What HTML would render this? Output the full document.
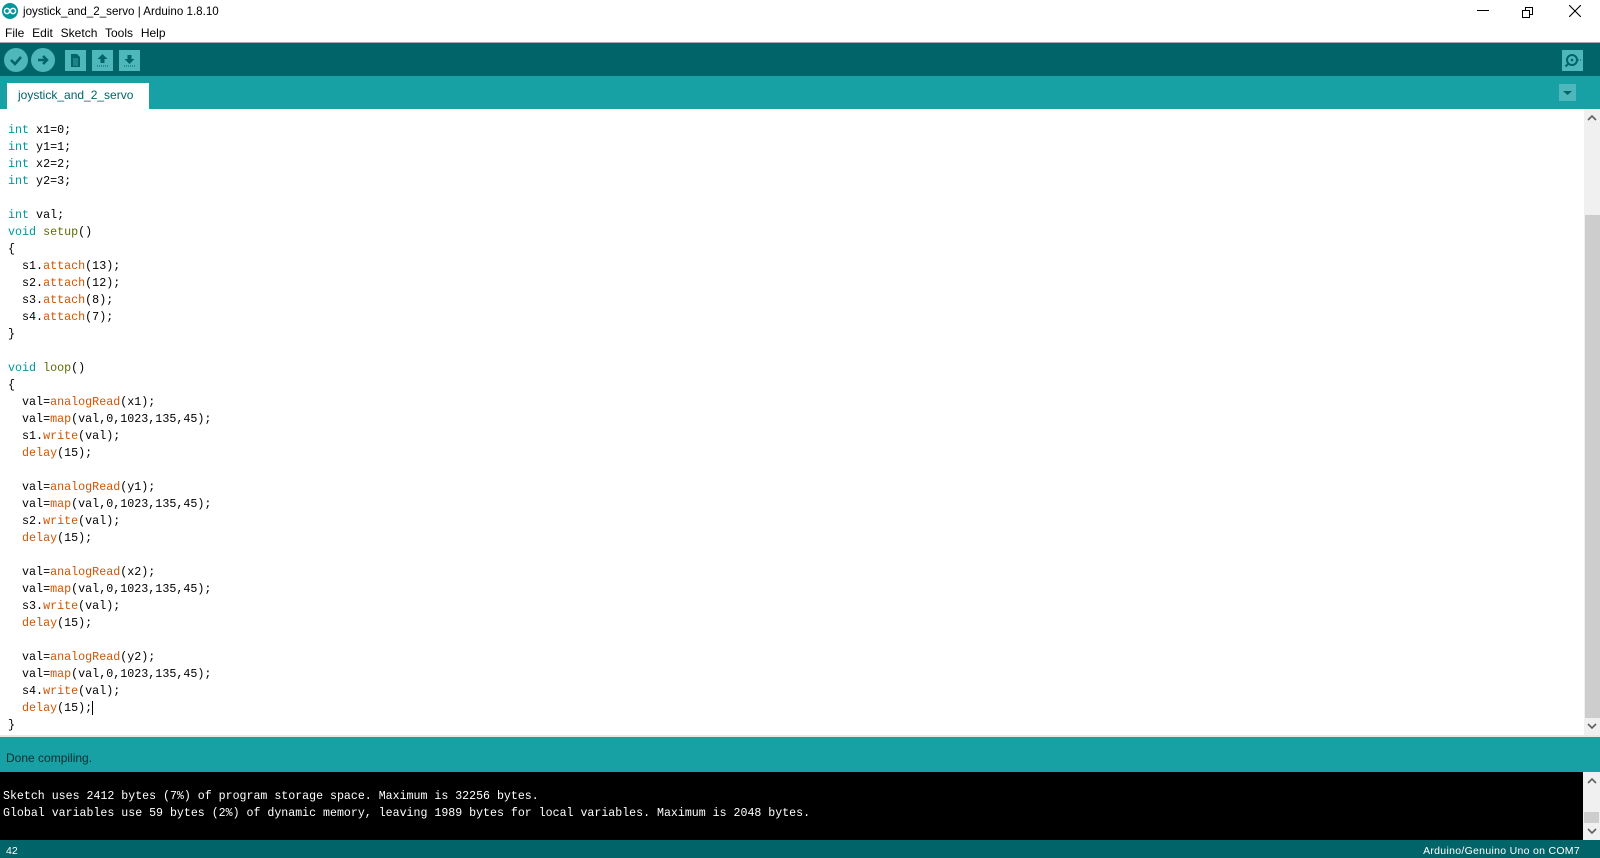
<!DOCTYPE html>
<html><head><meta charset="utf-8"><style>
*{margin:0;padding:0;box-sizing:border-box}
body{width:1600px;height:858px;overflow:hidden;background:#fff;font-family:"Liberation Sans",sans-serif;position:relative}
.abs{position:absolute}
#code{position:absolute;left:8px;top:122px;font-family:"Liberation Mono",monospace;font-size:11.7px;line-height:17px;color:#000;white-space:pre}
.k{color:#00979C}.f{color:#D35400}.s{color:#5E6D03}
#con{position:absolute;left:3px;top:788px;font-family:"Liberation Mono",monospace;font-size:11.6px;line-height:17px;color:#fff;white-space:pre}
.btn{position:absolute;background:#4DB7BB}
</style></head><body>
<svg class="abs" style="left:2px;top:3px" width="16" height="16" viewBox="0 0 16 16"><circle cx="8" cy="8" r="8" fill="#00979C"/><circle cx="5" cy="8" r="2.6" fill="none" stroke="#fff" stroke-width="1.5"/><circle cx="11" cy="8" r="2.6" fill="none" stroke="#fff" stroke-width="1.5"/></svg>
<div class="abs" style="left:23px;top:5px;font-size:11.6px;color:#000">joystick_and_2_servo | Arduino 1.8.10</div>
<div class="abs" style="left:1477px;top:10px;width:12px;height:1px;background:#000"></div>
<div class="abs" style="left:1525px;top:7px;width:8px;height:8px;border:1px solid #000"></div>
<div class="abs" style="left:1522px;top:10px;width:8px;height:8px;border:1px solid #000;background:#fff"></div>
<svg class="abs" style="left:1569px;top:5px" width="12" height="12"><path d="M0 0L12 12M12 0L0 12" stroke="#000" stroke-width="1.1"/></svg>
<div class="abs" style="left:5px;top:26px;font-size:12px;color:#000;word-spacing:4.5px">File Edit Sketch Tools Help</div>
<div class="abs" style="left:0;top:42px;width:1600px;height:1px;background:#aaa"></div>
<div class="abs" style="left:0;top:43px;width:1600px;height:33px;background:#006468"></div>
<div class="btn" style="left:4px;top:48px;width:24px;height:24px;border-radius:50%"></div>
<svg class="abs" style="left:4px;top:48px" width="24" height="24"><path d="M7 12l4 4 6-7" stroke="#006468" stroke-width="2.5" fill="none"/></svg>
<div class="btn" style="left:31px;top:48px;width:24px;height:24px;border-radius:50%"></div>
<svg class="abs" style="left:31px;top:48px" width="24" height="24"><path d="M7 12h8M12 8l4 4-4 4" stroke="#006468" stroke-width="2.5" fill="none"/></svg>
<div class="btn" style="left:65px;top:50px;width:21px;height:21px"></div>
<svg class="abs" style="left:65px;top:50px" width="21" height="21"><path d="M6 4h6l3 3v10H6z" fill="#006468"/><path d="M8 9h5M8 11h5M8 13h5M8 15h5" stroke="#4DB7BB" stroke-width="0.8"/></svg>
<div class="btn" style="left:92px;top:50px;width:21px;height:21px"></div>
<svg class="abs" style="left:92px;top:50px" width="21" height="21"><path d="M10.5 4l5 5h-3v4h-4V9h-3z" fill="#006468"/><path d="M5 16h11" stroke="#006468" stroke-dasharray="1 1"/></svg>
<div class="btn" style="left:119px;top:50px;width:21px;height:21px"></div>
<svg class="abs" style="left:119px;top:50px" width="21" height="21"><path d="M10.5 14l5-5h-3V5h-4v4h-3z" fill="#006468"/><path d="M5 16h11" stroke="#006468" stroke-dasharray="1 1"/></svg>
<div class="btn" style="left:1562px;top:50px;width:21px;height:21px"></div>
<svg class="abs" style="left:1562px;top:50px" width="21" height="21"><circle cx="10" cy="10" r="5" fill="none" stroke="#006468" stroke-width="2"/><circle cx="10" cy="10" r="1.3" fill="#006468"/><path d="M6.5 13.5l-3 3" stroke="#006468" stroke-width="2"/><path d="M16 10h3" stroke="#006468" stroke-dasharray="1 1"/></svg>
<div class="abs" style="left:0;top:76px;width:1600px;height:33px;background:#17A1A5"></div>
<div class="abs" style="left:7px;top:83px;width:142px;height:26px;background:#fff"></div>
<div class="abs" style="left:18px;top:88px;font-size:12px;color:#006468">joystick_and_2_servo</div>
<div class="abs" style="left:1559px;top:84px;width:17px;height:17px;background:#4DB7BB"></div>
<svg class="abs" style="left:1559px;top:84px" width="17" height="17"><path d="M4 7h9l-4.5 4z" fill="#006468"/></svg>
<div id="code"><span class="k">int</span> x1=0;
<span class="k">int</span> y1=1;
<span class="k">int</span> x2=2;
<span class="k">int</span> y2=3;

<span class="k">int</span> val;
<span class="k">void</span> <span class="s">setup</span>()
{
  s1.<span class="f">attach</span>(13);
  s2.<span class="f">attach</span>(12);
  s3.<span class="f">attach</span>(8);
  s4.<span class="f">attach</span>(7);
}

<span class="k">void</span> <span class="s">loop</span>()
{
  val=<span class="f">analogRead</span>(x1);
  val=<span class="f">map</span>(val,0,1023,135,45);
  s1.<span class="f">write</span>(val);
  <span class="f">delay</span>(15);

  val=<span class="f">analogRead</span>(y1);
  val=<span class="f">map</span>(val,0,1023,135,45);
  s2.<span class="f">write</span>(val);
  <span class="f">delay</span>(15);

  val=<span class="f">analogRead</span>(x2);
  val=<span class="f">map</span>(val,0,1023,135,45);
  s3.<span class="f">write</span>(val);
  <span class="f">delay</span>(15);

  val=<span class="f">analogRead</span>(y2);
  val=<span class="f">map</span>(val,0,1023,135,45);
  s4.<span class="f">write</span>(val);
  <span class="f">delay</span>(15);<span style="border-left:1px solid #000"></span>
}</div>
<div class="abs" style="left:1584px;top:109px;width:16px;height:626px;background:#f0f0f0"></div>
<div class="abs" style="left:1585px;top:215px;width:15px;height:503px;background:#cdcdcd"></div>
<svg class="abs" style="left:1584px;top:112px" width="16" height="12"><path d="M4 8l4-4 4 4" stroke="#606060" stroke-width="1.6" fill="none"/></svg>
<svg class="abs" style="left:1584px;top:720px" width="16" height="12"><path d="M4 4l4 4 4-4" stroke="#606060" stroke-width="1.6" fill="none"/></svg>
<div class="abs" style="left:0;top:735px;width:1600px;height:3px;background:#e8e8e8;border-bottom:1px solid #777"></div>
<div class="abs" style="left:0;top:738px;width:1600px;height:34px;background:#17A1A5"></div>
<div class="abs" style="left:6px;top:751px;font-size:12px;color:#0b2d2e">Done compiling.</div>
<div class="abs" style="left:0;top:772px;width:1600px;height:68px;background:#000"></div>
<div id="con">Sketch uses 2412 bytes (7%) of program storage space. Maximum is 32256 bytes.
Global variables use 59 bytes (2%) of dynamic memory, leaving 1989 bytes for local variables. Maximum is 2048 bytes.</div>
<div class="abs" style="left:1583px;top:772px;width:17px;height:68px;background:#f0f0f0"></div>
<div class="abs" style="left:1584px;top:812px;width:15px;height:11px;background:#cdcdcd"></div>
<svg class="abs" style="left:1584px;top:775px" width="16" height="12"><path d="M4 8l4-4 4 4" stroke="#606060" stroke-width="1.6" fill="none"/></svg>
<svg class="abs" style="left:1584px;top:825px" width="16" height="12"><path d="M4 4l4 4 4-4" stroke="#606060" stroke-width="1.6" fill="none"/></svg>
<div class="abs" style="left:0;top:840px;width:1600px;height:18px;background:#006468"></div>
<div class="abs" style="left:6px;top:845px;font-size:10.5px;color:#fff">42</div>
<div class="abs" style="right:20px;top:845px;font-size:10.5px;color:#fff;letter-spacing:0.3px">Arduino/Genuino Uno on COM7</div>
</body></html>
